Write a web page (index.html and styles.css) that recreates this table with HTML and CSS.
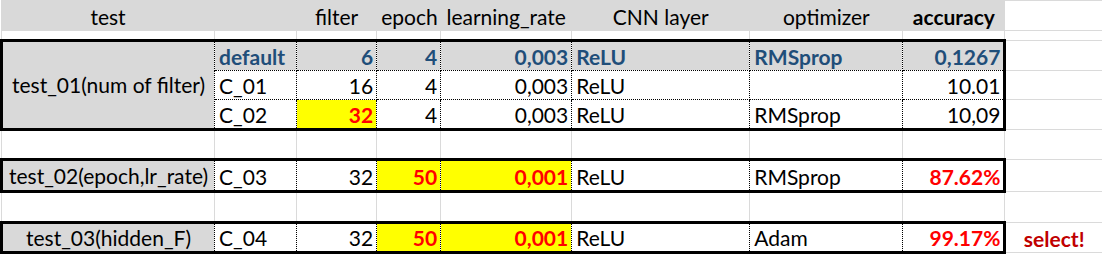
FILE: index.html
```html
<!DOCTYPE html>
<html>
<head>
<meta charset="utf-8">
<link rel="stylesheet" href="styles.css">
</head>
<body>
<table class="sheet">
  <colgroup>
    <col class="ca"><col class="cb"><col class="cc"><col class="cd"><col class="ce"><col class="cf"><col class="cg"><col class="ch"><col class="ci">
  </colgroup>
  <tr class="r-hdr">
    <td class="hd c">test</td>
    <td class="hd"></td>
    <td class="hd c">filter</td>
    <td class="hd c">epoch</td>
    <td class="hd c">learning_rate</td>
    <td class="hd c">CNN layer</td>
    <td class="hd c">optimizer</td>
    <td class="hd c bold">accuracy</td>
    <td class="last"></td>
  </tr>
  <tr class="r-sp">
    <td></td><td></td><td></td><td></td><td></td><td></td><td></td><td></td><td class="last"></td>
  </tr>
  <tr class="r3">
    <td class="in lab bt bb bl" rowspan="3">test_01(num of filter)</td>
    <td class="in gray blue bt">default</td>
    <td class="in gray blue n bt">6</td>
    <td class="in gray blue n bt">4</td>
    <td class="in gray blue n bt">0,003</td>
    <td class="in gray blue bt">ReLU</td>
    <td class="in gray blue bt">RMSprop</td>
    <td class="in gray blue n bt br">0,1267</td>
    <td class="last"></td>
  </tr>
  <tr class="r4">
    <td class="in">C_01</td>
    <td class="in n">16</td>
    <td class="in n">4</td>
    <td class="in n">0,003</td>
    <td class="in">ReLU</td>
    <td class="in"></td>
    <td class="in n br">10.01</td>
    <td class="last"></td>
  </tr>
  <tr class="r5">
    <td class="in bb">C_02</td>
    <td class="in n bb hl">32</td>
    <td class="in n bb">4</td>
    <td class="in n bb">0,003</td>
    <td class="in bb">ReLU</td>
    <td class="in bb">RMSprop</td>
    <td class="in n bb br">10,09</td>
    <td class="last"></td>
  </tr>
  <tr class="r6">
    <td></td><td></td><td></td><td></td><td></td><td></td><td></td><td></td><td class="last"></td>
  </tr>
  <tr class="r7">
    <td class="in lab bt bb bl">test_02(epoch,lr_rate)</td>
    <td class="in bt bb">C_03</td>
    <td class="in n bt bb">32</td>
    <td class="in n bt bb hl">50</td>
    <td class="in n bt bb hl">0,001</td>
    <td class="in bt bb">ReLU</td>
    <td class="in bt bb">RMSprop</td>
    <td class="in n bt bb br red">87.62%</td>
    <td class="last"></td>
  </tr>
  <tr class="r8">
    <td></td><td></td><td></td><td></td><td></td><td></td><td></td><td></td><td class="last"></td>
  </tr>
  <tr class="r9">
    <td class="in lab bt bb bl">test_03(hidden_F)</td>
    <td class="in bt bb">C_04</td>
    <td class="in n bt bb">32</td>
    <td class="in n bt bb hl">50</td>
    <td class="in n bt bb hl">0,001</td>
    <td class="in bt bb">ReLU</td>
    <td class="in bt bb">Adam</td>
    <td class="in n bt bb br red">99.17%</td>
    <td class="last c sel">select!</td>
  </tr>
</table>
</body>
</html>
```
FILE: styles.css
```css
html, body {
  margin: 0;
  padding: 0;
  background: #ffffff;
  overflow: hidden;
}
body {
  font-family: Lato, "Liberation Sans", sans-serif;
  font-size: 21px;
  color: #000;
}
.sheet {
  border-collapse: collapse;
  table-layout: fixed;
  width: 1102px;
}
.ca { width: 213px; }
.cb { width: 82px; }
.cc { width: 80px; }
.cd { width: 64px; }
.ce { width: 131px; }
.cf { width: 178px; }
.cg { width: 153px; }
.ch { width: 102px; }
.ci { width: 97px; }

.sheet td {
  box-sizing: border-box;
  border: 1px solid #dadada;
  padding: 0 4px 2px 4px;
  white-space: nowrap;
  overflow: hidden;
  vertical-align: bottom;
  line-height: 22px;
  text-align: left;
}
.sheet td.last { border-right: 0 none; }
.r-hdr td { height: 30px; }
.r-sp td { height: 10px; line-height: 6px; padding: 0; }
.r3 td { height: 30px; }
.r4 td { height: 29px; }
.r5 td { height: 30px; }
.r6 td { height: 30px; }
.r7 td { height: 32px; }
.r8 td { height: 31px; }
.r9 td { height: 30px; }

.sheet td.hd {
  background: #d9d9d9;
  border-color: #d9d9d9;
}
.sheet td.c { text-align: center; }
.sheet td.n { text-align: right; padding-right: 3px; }
.bold { font-weight: 700; }

.sheet td.in { border: 1px dotted #000; }
.sheet td.bt { border-top: 3px solid #000; }
.sheet td.bb { border-bottom: 3px solid #000; }
.sheet td.bl { border-left: 3px solid #000; }
.sheet td.br { border-right: 3px solid #000; }

.sheet td.lab {
  background: #d9d9d9;
  text-align: center;
  vertical-align: middle;
  padding: 0 1px;
}
.gray { background: #d9d9d9; }
.blue { color: #1f4e79; font-weight: 700; }
.hl { background: #ffff00; color: #ff0000; font-weight: 700; }
.red { color: #ff0000; font-weight: 700; }
.sel { color: #c00000; font-weight: 700; }
```
